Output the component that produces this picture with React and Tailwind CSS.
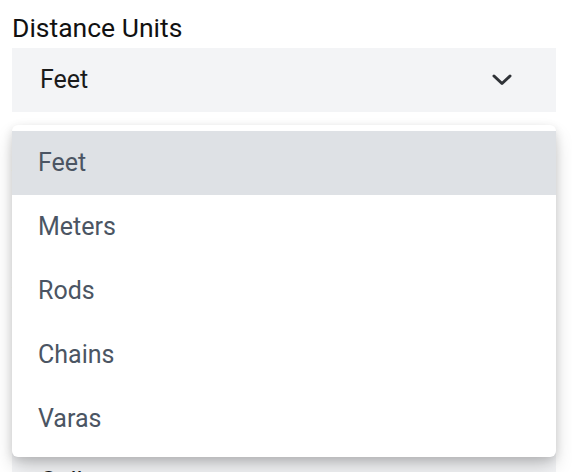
import { useState } from "react"

const units = ["Feet","Meters","Rods","Chains","Varas"]

function Chevron(){
  return(
    <svg width="20" height="12" viewBox="0 0 20 12" fill="none" className="text-[#2f3237]">
      <polyline points="2,2 10,9.5 18,2" stroke="currentColor" strokeWidth="3" strokeLinecap="round" strokeLinejoin="round" />
    </svg>
  )
}

function Field({label,value,select=true,children}){
  return(
    <div className="relative">
      <div className="h-8 text-[26.5px] leading-8 text-[#111111]">{label}</div>
      <div className="mt-1 flex h-16 items-center justify-between bg-[#f3f4f6] pl-[28px] pr-[44px]">
        <span className="text-[25px] text-[#1a1a1a]">{value}</span>
        {select && <Chevron />}
      </div>
      {children}
    </div>
  )
}

export default function App(){

  const [selected,setSelected] = useState("Feet")

  return(
    <div className="h-[472px] overflow-hidden bg-white pl-3 pr-4 pt-3 font-['Roboto','Liberation_Sans',sans-serif]">

      <div className="flex flex-col gap-[34px]">

        <Field label="Distance Units" value={selected}>

          {/* OPEN MENU */}
          <div className="absolute left-0 right-0 top-full z-10 mt-[13px] rounded-md bg-white py-1.5 shadow-[0_10px_20px_-2px_rgba(0,0,0,0.2),0_3px_10px_0_rgba(0,0,0,0.12)]">
            {units.map(u=>(
              <div
                key={u}
                onClick={()=>setSelected(u)}
                className={"flex h-16 items-center pl-[26px] text-[25px] text-[#4b5563] " + (u === selected ? "bg-[#dee1e5]" : "bg-white")}
              >
                {u}
              </div>
            ))}
          </div>

        </Field>

        <Field label="Area Units" value="Acres" />

        <Field label="Volume Units" value="Gallons" />

        <Field label="Collection Name" value="Coll" select={false} />

      </div>

    </div>
  )
}
